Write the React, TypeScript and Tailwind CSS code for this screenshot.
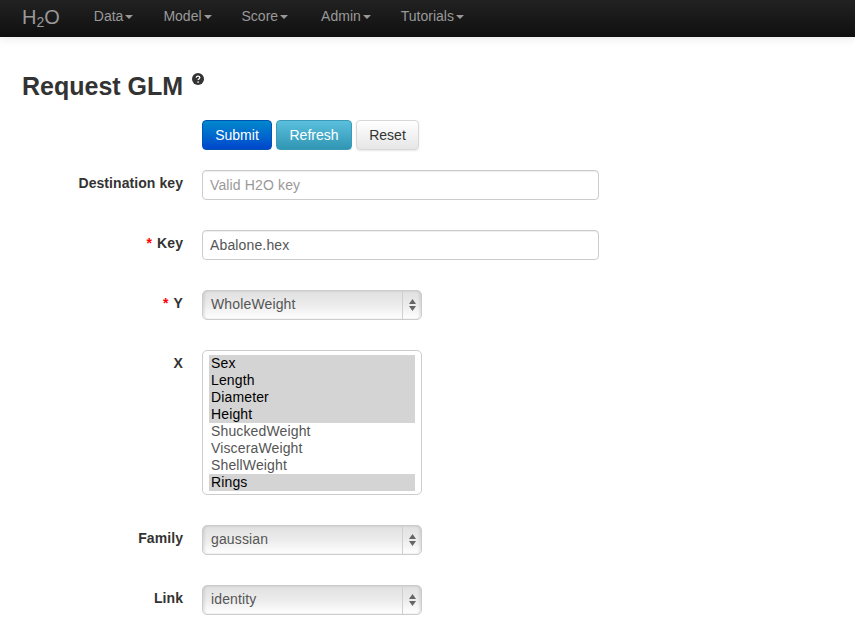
const navItems = [
  { label: 'Data', className: 'ml-[34px]' },
  { label: 'Model', className: 'ml-[30px]' },
  { label: 'Score', className: 'ml-[30px]' },
  { label: 'Admin', className: 'ml-[33px]' },
  { label: 'Tutorials', className: 'ml-[30px]' },
]

const columns = [
  { name: 'Sex', selected: true },
  { name: 'Length', selected: true },
  { name: 'Diameter', selected: true },
  { name: 'Height', selected: true },
  { name: 'ShuckedWeight', selected: false },
  { name: 'VisceraWeight', selected: false },
  { name: 'ShellWeight', selected: false },
  { name: 'Rings', selected: true },
]

function Row({ label, required, children }: { label: string; required?: boolean; children: React.ReactNode }) {
  return (
    <div className="mb-[30px] flex items-start">
      <div className="flex w-[183px] justify-end pt-[3px] text-[14px] leading-[20px] font-bold tracking-[0.07px] text-[#333]">
        {required && <span className="mr-[5px] text-[#f00]">*</span>}
        {label}
      </div>
      <div className="ml-[19px]">{children}</div>
    </div>
  )
}

function FakeSelect({ value }: { value: string }) {
  return (
    <div className="flex h-[30px] w-[220px] items-stretch rounded-[5px] border border-[#ccc] bg-gradient-to-b from-[#e0e0e0] via-[#ececec] to-white text-[14px] leading-[26px] tracking-[0.14px] text-[#555] shadow-[inset_2px_0_2px_rgba(0,0,0,0.08),inset_-2px_0_2px_rgba(0,0,0,0.08)]">
      <span className="flex-1 pl-[8px]">{value}</span>
      <span className="flex w-[19px] flex-col items-center justify-center gap-[2px] border-l border-[#d0d0d0] pl-[1px]">
        <svg width="7" height="5" viewBox="0 0 7 5"><path d="M3.5 0 7 5H0Z" fill="#666" /></svg>
        <svg width="7" height="5" viewBox="0 0 7 5"><path d="M0 0H7L3.5 5Z" fill="#666" /></svg>
      </span>
    </div>
  )
}

export default function App() {
  return (
    <div className="h-[639px] w-[855px] overflow-hidden bg-white font-['Liberation_Sans',Arial,sans-serif]">
      <div className="flex h-[37px] items-center bg-gradient-to-b from-[#222] to-[#0f0f0f] pb-[4px] pl-[22px] shadow-[0_1px_10px_rgba(0,0,0,0.1)]">
        <span className="flex h-[26px] items-start text-[20px] leading-[26px] text-[#999]">
          H<span className="mt-[5px] text-[14px] leading-[26px]">2</span>O
        </span>
        {navItems.map((item) => (
          <span key={item.label} className={`flex items-center text-[14px] text-[#999] ${item.className}`}>
            {item.label}
            <span className="mt-[1px] ml-[2px] h-0 w-0 border-x-[4px] border-t-[4px] border-x-transparent border-t-[#999]" />
          </span>
        ))}
      </div>

      <h3 className="mt-[32px] ml-[22px] flex h-[34px] items-start text-[25px] leading-[34px] font-bold text-[#333]">
        Request GLM
        <svg className="mt-[4px] ml-[9px]" width="12" height="12" viewBox="0 0 12 12">
          <circle cx="6" cy="6" r="6" fill="#333" />
          <path d="M4.2 4.7C4.3 3.6 5 3.1 6 3.1s1.8.6 1.8 1.5c0 1.3-1.7 1.3-1.7 2.5" fill="none" stroke="#fff" strokeWidth="1.3" />
          <circle cx="6.1" cy="9" r=".85" fill="#fff" />
        </svg>
      </h3>

      <div className="mt-[17px] ml-[202px] flex gap-[4px] text-[14px] leading-[20px]">
        <button className="h-[30px] w-[70px] rounded-[4px] border border-[#0055b3] bg-gradient-to-b from-[#0088cc] to-[#0044cc] text-white">Submit</button>
        <button className="h-[30px] w-[76px] rounded-[4px] border border-[#3a9ab8] bg-gradient-to-b from-[#5bc0de] to-[#2f96b4] text-white">Refresh</button>
        <button className="h-[30px] w-[63px] rounded-[4px] border border-[#d8d8d8] bg-gradient-to-b from-white to-[#e6e6e6] text-[#333] shadow-[0_1px_2px_rgba(0,0,0,0.1)]">Reset</button>
      </div>

      <div className="mt-[20px]">
        <Row label="Destination key">
          <input
            readOnly
            placeholder="Valid H2O key"
            className="block h-[30px] w-[397px] rounded-[4px] border border-[#ccc] px-[7px] text-[14px] tracking-[0.14px] text-[#555] shadow-[inset_0_1px_1px_rgba(0,0,0,0.075)] outline-none placeholder:text-[#999]"
          />
        </Row>
        <Row label="Key" required>
          <input
            readOnly
            value="Abalone.hex"
            className="block h-[30px] w-[397px] rounded-[4px] border border-[#ccc] px-[7px] text-[14px] tracking-[0.14px] text-[#555] shadow-[inset_0_1px_1px_rgba(0,0,0,0.075)] outline-none"
          />
        </Row>
        <Row label="Y" required>
          <FakeSelect value="WholeWeight" />
        </Row>
        <Row label="X">
          <div className="h-[145px] w-[220px] rounded-[5px] border border-[#ccc] px-[6px] py-[4px] text-[14px] leading-[17px] tracking-[0.14px]">
            {columns.map((c) => (
              <div key={c.name} className={c.selected ? 'bg-[#d4d4d4] pl-[2px] text-black' : 'pl-[2px] text-[#555]'}>
                {c.name}
              </div>
            ))}
          </div>
        </Row>
        <Row label="Family">
          <FakeSelect value="gaussian" />
        </Row>
        <Row label="Link">
          <FakeSelect value="identity" />
        </Row>
      </div>
    </div>
  )
}
